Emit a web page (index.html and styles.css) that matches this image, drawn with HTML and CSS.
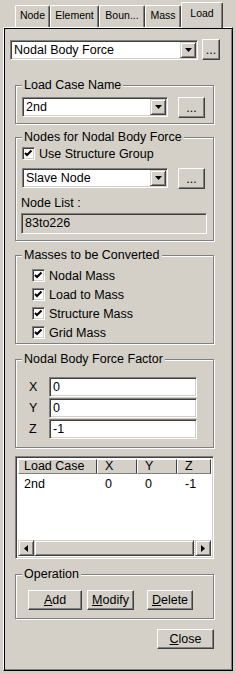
FILE: index.html
```html
<!DOCTYPE html>
<html lang="en">
<head>
    <meta charset="UTF-8">
    <title>Load - Nodal Body Force</title>
    <link rel="stylesheet" href="styles.css">
</head>
<body>

<div class="tabs">
    <div class="tab t-node">Node</div>
    <div class="tab t-elem">Element</div>
    <div class="tab t-boun">Boun...</div>
    <div class="tab t-mass">Mass</div>
    <div class="tab t-load active">Load</div>
</div>

<div class="panel">
    <div class="toprow">
        <div class="combo c-type"><span class="val">Nodal Body Force</span><span class="drop"><svg width="7" height="4" viewBox="0 0 7 4"><polygon points="0,0 7,0 3.5,4" fill="#000"/></svg></span></div>
        <button class="btn dots">...</button>
    </div>

    <div class="group g-case">
        <div class="title">Load Case Name</div>
        <div class="row">
            <div class="combo c-small"><span class="val">2nd</span><span class="drop"><svg width="7" height="4" viewBox="0 0 7 4"><polygon points="0,0 7,0 3.5,4" fill="#000"/></svg></span></div>
            <button class="btn more">...</button>
        </div>
    </div>

    <div class="group g-nodes">
        <div class="title">Nodes for Nodal Body Force</div>
        <div class="check first"><span class="chk"><svg width="11" height="11" viewBox="0 0 11 11"><polyline points="2,5 4,7 8.5,2.5" fill="none" stroke="#000" stroke-width="2"/></svg></span>Use Structure Group</div>
        <div class="row r-slave">
            <div class="combo c-small"><span class="val">Slave Node</span><span class="drop"><svg width="7" height="4" viewBox="0 0 7 4"><polygon points="0,0 7,0 3.5,4" fill="#000"/></svg></span></div>
            <button class="btn more">...</button>
        </div>
        <div class="label">Node List :</div>
        <div class="field disabled nodelist">83to226</div>
    </div>

    <div class="group g-mass">
        <div class="title">Masses to be Converted</div>
        <div class="mass-list">
            <div class="check"><span class="chk"><svg width="11" height="11" viewBox="0 0 11 11"><polyline points="2,5 4,7 8.5,2.5" fill="none" stroke="#000" stroke-width="2"/></svg></span>Nodal Mass</div>
            <div class="check"><span class="chk"><svg width="11" height="11" viewBox="0 0 11 11"><polyline points="2,5 4,7 8.5,2.5" fill="none" stroke="#000" stroke-width="2"/></svg></span>Load to Mass</div>
            <div class="check"><span class="chk"><svg width="11" height="11" viewBox="0 0 11 11"><polyline points="2,5 4,7 8.5,2.5" fill="none" stroke="#000" stroke-width="2"/></svg></span>Structure Mass</div>
            <div class="check"><span class="chk"><svg width="11" height="11" viewBox="0 0 11 11"><polyline points="2,5 4,7 8.5,2.5" fill="none" stroke="#000" stroke-width="2"/></svg></span>Grid Mass</div>
        </div>
    </div>

    <div class="group g-factor">
        <div class="title">Nodal Body Force Factor</div>
        <div class="factors">
            <div class="frow"><span class="axis">X</span><div class="field">0</div></div>
            <div class="frow"><span class="axis">Y</span><div class="field">0</div></div>
            <div class="frow"><span class="axis">Z</span><div class="field">-1</div></div>
        </div>
    </div>

    <div class="list">
        <div class="thead">
            <div class="th c1">Load Case</div>
            <div class="th c2">X</div>
            <div class="th c3">Y</div>
            <div class="th c4">Z</div>
        </div>
        <div class="tbody">
            <div class="tr">
                <div class="td c1">2nd</div>
                <div class="td c2">0</div>
                <div class="td c3">0</div>
                <div class="td c4">-1</div>
            </div>
        </div>
        <div class="hscroll">
            <span class="sbtn"><svg width="4" height="7" viewBox="0 0 4 7"><polygon points="4,0 4,7 0,3.5" fill="#000"/></svg></span>
            <span class="thumb"></span>
            <span class="track"></span>
            <span class="sbtn"><svg width="4" height="7" viewBox="0 0 4 7"><polygon points="0,0 0,7 4,3.5" fill="#000"/></svg></span>
        </div>
    </div>

    <div class="group g-op">
        <div class="title">Operation</div>
        <div class="ops">
            <button class="btn b-add"><u>A</u>dd</button>
            <button class="btn b-modify"><u>M</u>odify</button>
            <button class="btn b-delete"><u>D</u>elete</button>
        </div>
    </div>

    <button class="btn b-close"><u>C</u>lose</button>
</div>

</body>
</html>
```

FILE: styles.css
```css
* {
    box-sizing: border-box;
}
body {
    margin: 0;
    width: 236px;
    height: 674px;
    overflow: hidden;
    background-color: #d4d0c8;
    font-family: "Liberation Sans", Arial, sans-serif;
    font-size: 12.5px;
    color: #000;
}

/* tabs */
.tabs {
    display: flex;
    align-items: flex-end;
    height: 27px;
    padding-left: 15px;
}
.tab {
    height: 22px;
    border: 1px solid;
    border-color: #fff #404040 transparent #fff;
    border-bottom: none;
    border-radius: 2px 2px 0 0;
    box-shadow: inset -1px 0 0 #808080;
    font-size: 10.5px;
    line-height: 19px;
    text-align: center;
    background-color: #d4d0c8;
}
.t-node { width: 35px; }
.t-elem { width: 49px; }
.t-boun { width: 46px; }
.t-mass { width: 36px; }
.t-load { width: 42px; }
.tab.active {
    height: 26px;
    margin-bottom: -1px;
    line-height: 20px;
    position: relative;
    z-index: 1;
}

/* page */
.panel {
    margin-left: 3px;
    width: 230px;
    height: 644px;
    border: 1px solid;
    border-color: #fff #000 #000 #fff;
    box-shadow: inset 1px 1px 0 #000, inset -1px -1px 0 #808080;
    overflow: hidden;
}
.toprow {
    display: flex;
    margin: 11px 0 0 6px;
    height: 21px;
}
.row {
    display: flex;
    height: 21px;
}

/* sunken controls */
.combo, .field, .list, .chk {
    border: 1px solid;
    border-color: #808080 #fff #fff #808080;
    box-shadow: inset 1px 1px 0 #404040, inset -1px -1px 0 #d4d0c8;
    background-color: #fff;
}
.combo {
    display: flex;
    height: 20px;
    padding: 1px;
}
.combo .val {
    flex: 1;
    padding-left: 2px;
    line-height: 16px;
    white-space: nowrap;
    overflow: hidden;
}
.c-type {
    width: 188px;
    margin-top: 1px;
}
.c-small {
    width: 146px;
}
.drop, .sbtn {
    width: 16px;
    height: 16px;
    display: flex;
    align-items: center;
    justify-content: center;
    background-color: #d4d0c8;
    border: 1px solid;
    border-color: #d4d0c8 #404040 #404040 #d4d0c8;
    box-shadow: inset 1px 1px 0 #fff, inset -1px -1px 0 #808080;
}
.field {
    height: 20px;
    padding: 0 3px;
    line-height: 18px;
}
.field.disabled {
    background-color: #d4d0c8;
}

/* buttons */
.btn {
    font: inherit;
    color: #000;
    padding: 0;
    height: 20px;
    background-color: #d4d0c8;
    border: 1px solid;
    border-color: #fff #404040 #404040 #fff;
    box-shadow: inset -1px -1px 0 #808080;
    text-align: center;
}
.btn.dots {
    width: 18px;
    height: 21px;
    margin-left: 4px;
    line-height: 14px;
}
.btn.more {
    width: 27px;
    height: 21px;
    margin-left: 10px;
}

/* group boxes */
.group {
    margin-left: 11px;
    width: 199px;
    border: 1px solid #808080;
    box-shadow: 1px 1px 0 #fff, inset 1px 1px 0 #fff;
    padding: 0 0 6px 6px;
}
.title {
    width: fit-content;
    margin: -8px 0 0 0;
    padding: 0 2px;
    line-height: 14px;
    background-color: #d4d0c8;
}
.g-case {
    margin-top: 25px;
    padding-bottom: 5px;
}
.g-case .row {
    margin-top: 5px;
}
.g-nodes {
    margin-top: 13px;
}
.check {
    display: flex;
    align-items: center;
    height: 19px;
    line-height: 14px;
}
.check.first {
    margin-top: 1px;
    height: 17px;
}
.chk {
    width: 13px;
    height: 13px;
    margin-right: 4px;
    flex-shrink: 0;
}
.chk svg {
    display: block;
}
.r-slave {
    margin-top: 6px;
}
.label {
    margin: 7px 0 0 -1px;
    line-height: 14px;
}
.nodelist {
    margin: 3px 0 0 -1px;
    width: 186px;
    height: 21px;
}
.g-mass {
    margin-top: 14px;
    padding-bottom: 1px;
}
.mass-list {
    margin-top: 4px;
    padding-left: 10px;
}
.g-factor {
    margin-top: 15px;
    padding-bottom: 8px;
}
.factors {
    margin-top: 11px;
    display: flex;
    flex-direction: column;
    gap: 1px;
}
.frow {
    display: flex;
    height: 20px;
    align-items: center;
}
.axis {
    width: 27px;
    padding-left: 7px;
}
.frow .field {
    width: 148px;
}

/* list view */
.list {
    margin: 8px 0 0 11px;
    width: 199px;
    height: 103px;
    padding: 2px;
    display: flex;
    flex-direction: column;
}
.thead {
    display: flex;
    height: 15px;
}
.th {
    background-color: #d4d0c8;
    border: 1px solid;
    border-color: #fff #404040 #808080 #fff;
    line-height: 13px;
    padding-left: 5px;
}
.c1 { width: 79px; }
.c2 { width: 40px; }
.c3 { width: 40px; }
.c4 { flex: 1; }
.th.c2, .th.c3, .th.c4 {
    padding-left: 7px;
}
.tbody {
    flex: 1;
}
.tr {
    display: flex;
    height: 16px;
    margin-top: 2px;
    line-height: 16px;
}
.td {
    padding-left: 6px;
}
.td.c2, .td.c3, .td.c4 {
    padding-left: 8px;
}
.hscroll {
    display: flex;
    height: 16px;
}
.thumb {
    width: 160px;
    background-color: #d4d0c8;
    border: 1px solid;
    border-color: #d4d0c8 #404040 #404040 #d4d0c8;
    box-shadow: inset 1px 1px 0 #fff, inset -1px -1px 0 #808080;
}
.track {
    flex: 1;
    background-color: #d4d0c8;
    background-image: repeating-conic-gradient(#fff 0 25%, #d4d0c8 0 50%);
    background-size: 2px 2px;
}

/* operation */
.g-op {
    margin-top: 15px;
    padding-bottom: 8px;
}
.ops {
    display: flex;
    margin-top: 9px;
}
.b-add {
    width: 54px;
    margin-left: 6px;
}
.b-modify {
    width: 47px;
    margin-left: 5px;
}
.b-delete {
    width: 46px;
    margin-left: 13px;
}
.b-close {
    display: block;
    margin: 10px 0 0 153px;
    width: 57px;
}
```
